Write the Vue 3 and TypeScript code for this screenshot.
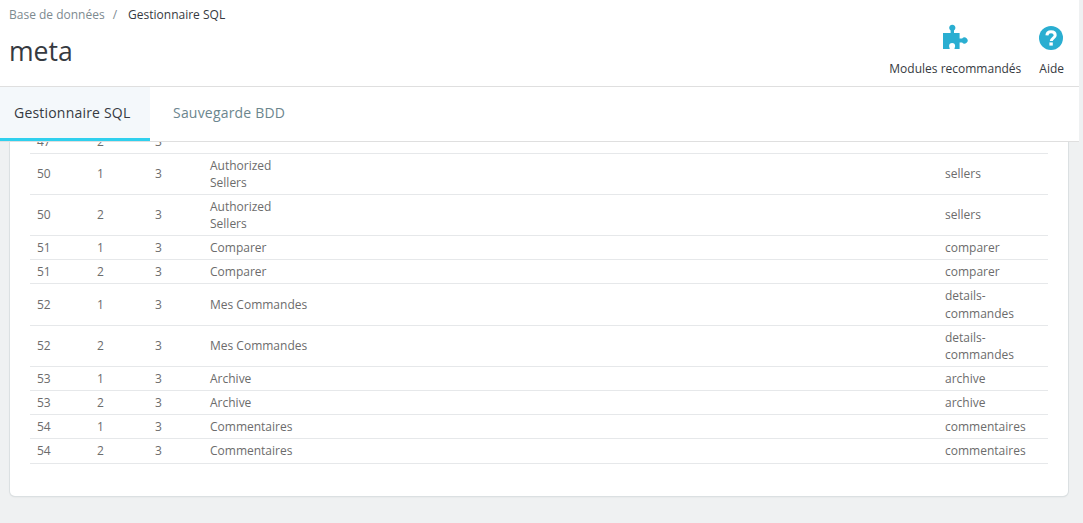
<script setup lang="ts">
interface Row { id: number; lang: number; shop: number; title: string; url: string }
const rows: Row[] = [
  { id: 47, lang: 2, shop: 3, title: '', url: '' },
  { id: 50, lang: 1, shop: 3, title: 'Authorized Sellers', url: 'sellers' },
  { id: 50, lang: 2, shop: 3, title: 'Authorized Sellers', url: 'sellers' },
  { id: 51, lang: 1, shop: 3, title: 'Comparer', url: 'comparer' },
  { id: 51, lang: 2, shop: 3, title: 'Comparer', url: 'comparer' },
  { id: 52, lang: 1, shop: 3, title: 'Mes Commandes', url: 'details-commandes' },
  { id: 52, lang: 2, shop: 3, title: 'Mes Commandes', url: 'details-commandes' },
  { id: 53, lang: 1, shop: 3, title: 'Archive', url: 'archive' },
  { id: 53, lang: 2, shop: 3, title: 'Archive', url: 'archive' },
  { id: 54, lang: 1, shop: 3, title: 'Commentaires', url: 'commentaires' },
  { id: 54, lang: 2, shop: 3, title: 'Commentaires', url: 'commentaires' }
]
</script>

<template>
  <div class="page">
    <div class="fixed-bars">
      <header class="head">
        <div class="head-left">
          <nav class="crumbs">
            <span class="crumb">Base de données</span>
            <span class="sep">/</span>
            <span class="crumb-current">Gestionnaire SQL</span>
          </nav>
          <h1 class="title">meta</h1>
        </div>
        <div class="actions">
          <a class="action">
            <svg class="icon icon-puzzle" viewBox="0 0 26 25" width="26" height="25">
              <path fill="#2aaed1" d="M0 9h7.600V6.400A3.100 3.100 0 1 1 11 6.400V9h5.600v5.500h2.500a3.100 3.100 0 1 1 0 4h-2.500V25H11.500c0-1.200.6-1.700.6-3a3 3 0 0 0-6 0c0 1.300.6 1.800.6 3H0z"/>
            </svg>
            <span>Modules recommandés</span>
          </a>
          <a class="action">
            <svg class="icon icon-help" viewBox="0 0 24 24" width="24" height="24">
              <circle cx="12" cy="12" r="12" fill="#2aaed1"/>
              <path d="M7.900 9.300C8.100 7 9.800 5.800 12 5.800c2.400 0 4.200 1.300 4.200 3.400 0 3-3.900 2.900-3.900 5.800" fill="none" stroke="#fff" stroke-width="3"/>
              <rect x="10.400" y="16.400" width="3.400" height="3.200" fill="#fff"/>
            </svg>
            <span>Aide</span>
          </a>
        </div>
      </header>

      <nav class="tabs">
        <a class="tab tab-active">Gestionnaire SQL</a>
        <a class="tab">Sauvegarde BDD</a>
      </nav>
    </div>

    <main class="scroller">
      <section class="card">
        <table class="grid">
          <colgroup>
            <col class="c-id" />
            <col class="c-lang" />
            <col class="c-shop" />
            <col class="c-title" />
            <col class="c-gap" />
            <col class="c-url" />
          </colgroup>
          <tbody>
            <tr v-for="(r, i) in rows" :key="i">
              <td>{{ r.id }}</td>
              <td>{{ r.lang }}</td>
              <td>{{ r.shop }}</td>
              <td>{{ r.title }}</td>
              <td></td>
              <td>{{ r.url }}</td>
            </tr>
          </tbody>
        </table>
      </section>
    </main>
  </div>
</template>

<style scoped>
.page {
  width: 1083px;
  height: 523px;
  overflow: hidden;
  display: flex;
  flex-direction: column;
  background: #eff1f2;
  font-family: "Open Sans", "Noto Sans", sans-serif;
  font-size: 12px;
}
.fixed-bars {
  flex: none;
  margin-right: 4px;
  position: relative;
  z-index: 2;
}
.head {
  height: 86px;
  background: #fff;
  border-bottom: 1px solid #dfdfdf;
  display: flex;
  justify-content: space-between;
}
.head-left {
  padding: 6px 0 0 9px;
}
.crumbs {
  display: flex;
  align-items: center;
  line-height: 18px;
}
.crumb {
  color: #7d8a90;
}
.sep {
  margin: 0 11px 0 8px;
  color: #7d8a90;
}
.crumb-current {
  color: #363a41;
}
.title {
  margin: 9px 0 0;
  font-size: 26.6px;
  font-weight: 400;
  line-height: 36px;
  color: #363a41;
}
.actions {
  display: flex;
  padding: 24px 15px 0 0;
  gap: 18px;
}
.action {
  display: flex;
  flex-direction: column;
  align-items: center;
  color: #363a41;
  line-height: 16px;
}
.icon {
  display: block;
  height: 25px;
  margin-bottom: 12px;
}
.icon-puzzle {
  transform: translateX(1px);
}
.icon-help {
  height: 24px;
  margin-top: 2px;
  margin-bottom: 11px;
  transform: translateX(-1px);
}
.tabs {
  height: 54px;
  display: flex;
  background: #fff;
  border-bottom: 1px solid #dfdfdf;
}
.tab {
  padding: 0 19px 0 14px;
  line-height: 52px;
  font-size: 14px;
  letter-spacing: 0.2px;
  color: #6c868e;
  margin-left: 9px;
}
.tab-active {
  margin-left: 0;
  width: 150px;
  box-sizing: border-box;
  height: 54px;
  background: #f4f8fb;
  color: #363a41;
  border-bottom: 3px solid #2fd0ee;
  padding: 0 0 0 14px;
}
.scroller {
  flex: 1;
  min-height: 0;
  overflow: hidden;
  padding: 0 15px 0 10px;
}
.card {
  margin-top: -30px;
  background: #fff;
  border-radius: 5px;
  box-shadow: 0 0 0 1px #dbe0e2, 0 1px 2px rgba(0, 0, 0, 0.1);
  padding: 17.5px 20px 32px;
}
.grid {
  width: 100%;
  border-collapse: collapse;
  table-layout: fixed;
}
.c-id { width: 67px; }
.c-lang { width: 58px; }
.c-shop { width: 55px; }
.c-title { width: 100px; }
.c-url { width: 103px; }
.grid td {
  padding: 3px 0;
  line-height: 1.42857;
  color: #6c6c6c;
  border-bottom: 1px solid #e6e8ea;
  vertical-align: middle;
}
.grid td:first-child {
  padding-left: 7px;
}
</style>

<style>
html, body {
  margin: 0;
  background: #eff1f2;
}
</style>
